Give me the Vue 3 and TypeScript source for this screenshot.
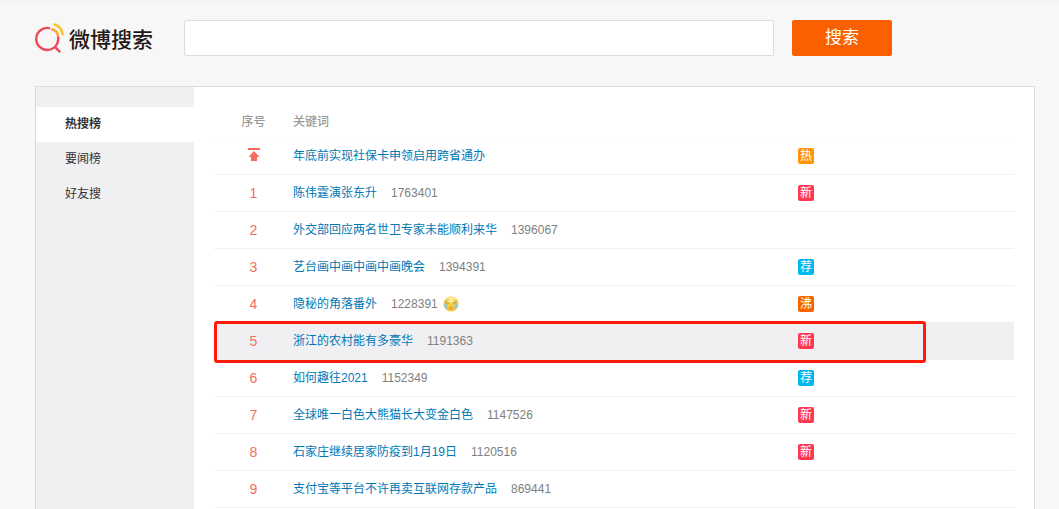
<script setup lang="ts">
import { ref } from 'vue'

type Tag = 'hot' | 'new' | 'rec' | 'boil'

interface Entry {
  rank: number | null
  word: string
  count?: number
  tag?: Tag
  crying?: boolean
  marked?: boolean
}

const tagText: Record<Tag, string> = { hot: '热', new: '新', rec: '荐', boil: '沸' }

const query = ref('')
const tabs = ['热搜榜', '要闻榜', '好友搜']
const active = ref(tabs[0])

const entries: Entry[] = [
  { rank: null, word: '年底前实现社保卡申领启用跨省通办', tag: 'hot' },
  { rank: 1, word: '陈伟霆演张东升', count: 1763401, tag: 'new' },
  { rank: 2, word: '外交部回应两名世卫专家未能顺利来华', count: 1396067 },
  { rank: 3, word: '艺台画中画中画中画晚会', count: 1394391, tag: 'rec' },
  { rank: 4, word: '隐秘的角落番外', count: 1228391, tag: 'boil', crying: true },
  { rank: 5, word: '浙江的农村能有多豪华', count: 1191363, tag: 'new', marked: true },
  { rank: 6, word: '如何趣往2021', count: 1152349, tag: 'rec' },
  { rank: 7, word: '全球唯一白色大熊猫长大变金白色', count: 1147526, tag: 'new' },
  { rank: 8, word: '石家庄继续居家防疫到1月19日', count: 1120516, tag: 'new' },
  { rank: 9, word: '支付宝等平台不许再卖互联网存款产品', count: 869441 },
]
</script>

<template>
  <div class="page">
    <header class="top">
      <a class="logo" href="#">
        <svg class="logo-mark" viewBox="0 0 30 32" aria-hidden="true">
          <path d="M22.9 14.3A11 11 0 1 1 15 6.3M19.6 24.6L25.2 30.2" fill="none" stroke="#ef4a5a" stroke-width="2.4" />
          <path d="M17.2 7.6Q21.6 8.6 22.9 12.8" fill="none" stroke="#f9a93a" stroke-width="2.6" stroke-linecap="round" />
          <path d="M19.6 2.6Q26 4.4 27.6 12.2" fill="none" stroke="#fbc52d" stroke-width="2.6" stroke-linecap="round" />
        </svg>
        <span class="logo-text">微博搜索</span>
      </a>
      <form class="search" role="search" @submit.prevent>
        <input v-model="query" class="search-input" type="text" aria-label="搜索" />
        <button class="search-button" type="submit">搜索</button>
      </form>
    </header>

    <main class="panel">
      <nav class="side">
        <a
          v-for="tab in tabs"
          :key="tab"
          href="#"
          class="side-link"
          :class="{ active: tab === active }"
          @click.prevent="active = tab"
        >{{ tab }}</a>
      </nav>

      <section class="content">
        <table class="list">
          <thead>
            <tr>
              <th class="rank-col" scope="col">序号</th>
              <th class="word-col" scope="col">关键词</th>
              <td class="tag-col"></td>
            </tr>
          </thead>
          <tbody>
            <tr v-for="entry in entries" :key="entry.word" :class="{ marked: entry.marked }">
              <td class="rank-col">
                <template v-if="entry.rank !== null">{{ entry.rank }}</template>
                <svg v-else class="pin" viewBox="0 0 12 13" role="img" aria-label="置顶">
                  <path d="M0 0H12V2H0ZM6 3L11.5 9H9V13H3V9H.5Z" fill="#f86b5f" />
                </svg>
              </td>
              <td class="word-col">
                <div class="word-line">
                  <a href="#">{{ entry.word }}</a>
                  <span v-if="entry.count" class="count">{{ entry.count }}</span>
                  <svg v-if="entry.crying" class="face" viewBox="0 0 16 16" role="img" aria-label="泪">
                    <circle cx="8" cy="8" r="7.6" fill="#f6cb3c" />
                    <ellipse cx="8" cy="4" rx="5" ry="3" fill="#fdea8c" />
                    <path d="M2.6 5.4Q4.6 4.8 5.8 3.6M13.4 5.4Q11.4 4.8 10.2 3.6" fill="none" stroke="#b98c35" stroke-width=".6" />
                    <path d="M2.4 6.8H6.2M9.8 6.8H13.6" stroke="#9a7c42" stroke-width=".8" />
                    <path d="M2 7.4H4.4V13.6Q2.4 12.6 1.2 10.6ZM11.6 7.4H14L14.8 10.6Q13.6 12.6 11.6 13.6Z" fill="#8fc6e4" />
                    <path d="M5.8 13.6V12.2Q5.8 10.8 8 10.8T10.2 12.2V13.6Z" fill="#e0a838" />
                  </svg>
                </div>
              </td>
              <td class="tag-col">
                <span v-if="entry.tag" class="tag" :class="entry.tag">{{ tagText[entry.tag] }}</span>
              </td>
            </tr>
          </tbody>
        </table>
      </section>
    </main>
  </div>
</template>

<style>
body {
  margin: 0;
  background: #f7f7f7;
}
</style>

<style scoped>
.page {
  box-sizing: border-box;
  display: flex;
  flex-direction: column;
  min-height: 100vh;
  background: linear-gradient(#f2f2f2, #f7f7f7 4px);
  color: #333;
  font: 12px/16px "Liberation Sans", "Noto Sans CJK SC", sans-serif;
}

a {
  color: inherit;
  text-decoration: none;
}

.top {
  display: flex;
  align-items: center;
  padding: 20px 24px 30px 35px;
}

.logo {
  display: flex;
  align-items: center;
  gap: 4px;
  width: 149px;
  flex: none;
}

.logo-mark {
  width: 30px;
  height: 32px;
}

.logo-text {
  padding-top: 4px;
  color: #231815;
  font-size: 21px;
  font-weight: 500;
  line-height: 32px;
  white-space: nowrap;
}

.search {
  display: flex;
  flex: 1;
  gap: 18px;
}

.search-input {
  box-sizing: border-box;
  flex: 1;
  min-width: 0;
  max-width: 590px;
  height: 36px;
  padding: 0 10px;
  border: 1px solid #dcdcdc;
  border-radius: 2px;
  background: #fff;
  font: inherit;
  font-size: 14px;
}

.search-button {
  width: 100px;
  height: 36px;
  padding: 0;
  border: 0;
  border-radius: 2px;
  background: #fa5f00;
  color: #fff;
  font: inherit;
  font-size: 17px;
}

.panel {
  display: flex;
  flex: 1;
  margin: 0 24px 0 35px;
  border: 1px solid #dcdcdc;
  border-bottom: 0;
  background: #fff;
}

.side {
  flex: none;
  width: 158px;
  padding-top: 20px;
  background: #f0f0f2;
}

.side-link {
  display: block;
  padding-left: 29px;
  line-height: 35px;
}

.side-link.active {
  background: #fff;
  font-weight: bold;
}

.content {
  flex: 1;
  min-width: 0;
  padding: 20px 20px 0;
}

.list {
  width: 100%;
  border-collapse: separate;
  border-spacing: 0;
  table-layout: fixed;
}

.list th,
.list td {
  box-sizing: border-box;
  height: 37px;
  padding: 0;
  border-bottom: 1px solid #f0f0f2;
  text-align: left;
}

.list thead th,
.list thead td {
  height: 31px;
  border-color: #fafafa;
  color: #999;
  font-weight: 500;
}

.list .rank-col {
  width: 79px;
  text-align: center;
}

.list tbody .rank-col {
  color: #f26d5f;
  font-size: 14px;
}

.list .tag-col {
  width: 216px;
}

.pin {
  display: block;
  width: 12px;
  height: 13px;
  margin: 0 auto 4px;
}

.word-line {
  display: flex;
  align-items: center;
  white-space: nowrap;
}

.word-line a {
  color: #0078b6;
}

.count {
  margin-left: 14px;
  color: #808080;
}

.face {
  width: 16px;
  height: 16px;
  margin-left: 5px;
}

.tag {
  display: block;
  width: 16px;
  height: 16px;
  border-radius: 2px;
  color: #fff;
  line-height: 16px;
  text-align: center;
}

.hot {
  background: #ff9406;
}

.new {
  background: #ff3852;
}

.rec {
  background: #00b7ee;
}

.boil {
  background: #f86400;
}

.marked {
  position: relative;
  background: #f0f0f2;
}

.marked .rank-col::after {
  position: absolute;
  inset: -2px 88px -3px 0;
  box-sizing: border-box;
  border: 3px solid #ff1a0a;
  border-radius: 3px;
  content: "";
  pointer-events: none;
}
</style>
